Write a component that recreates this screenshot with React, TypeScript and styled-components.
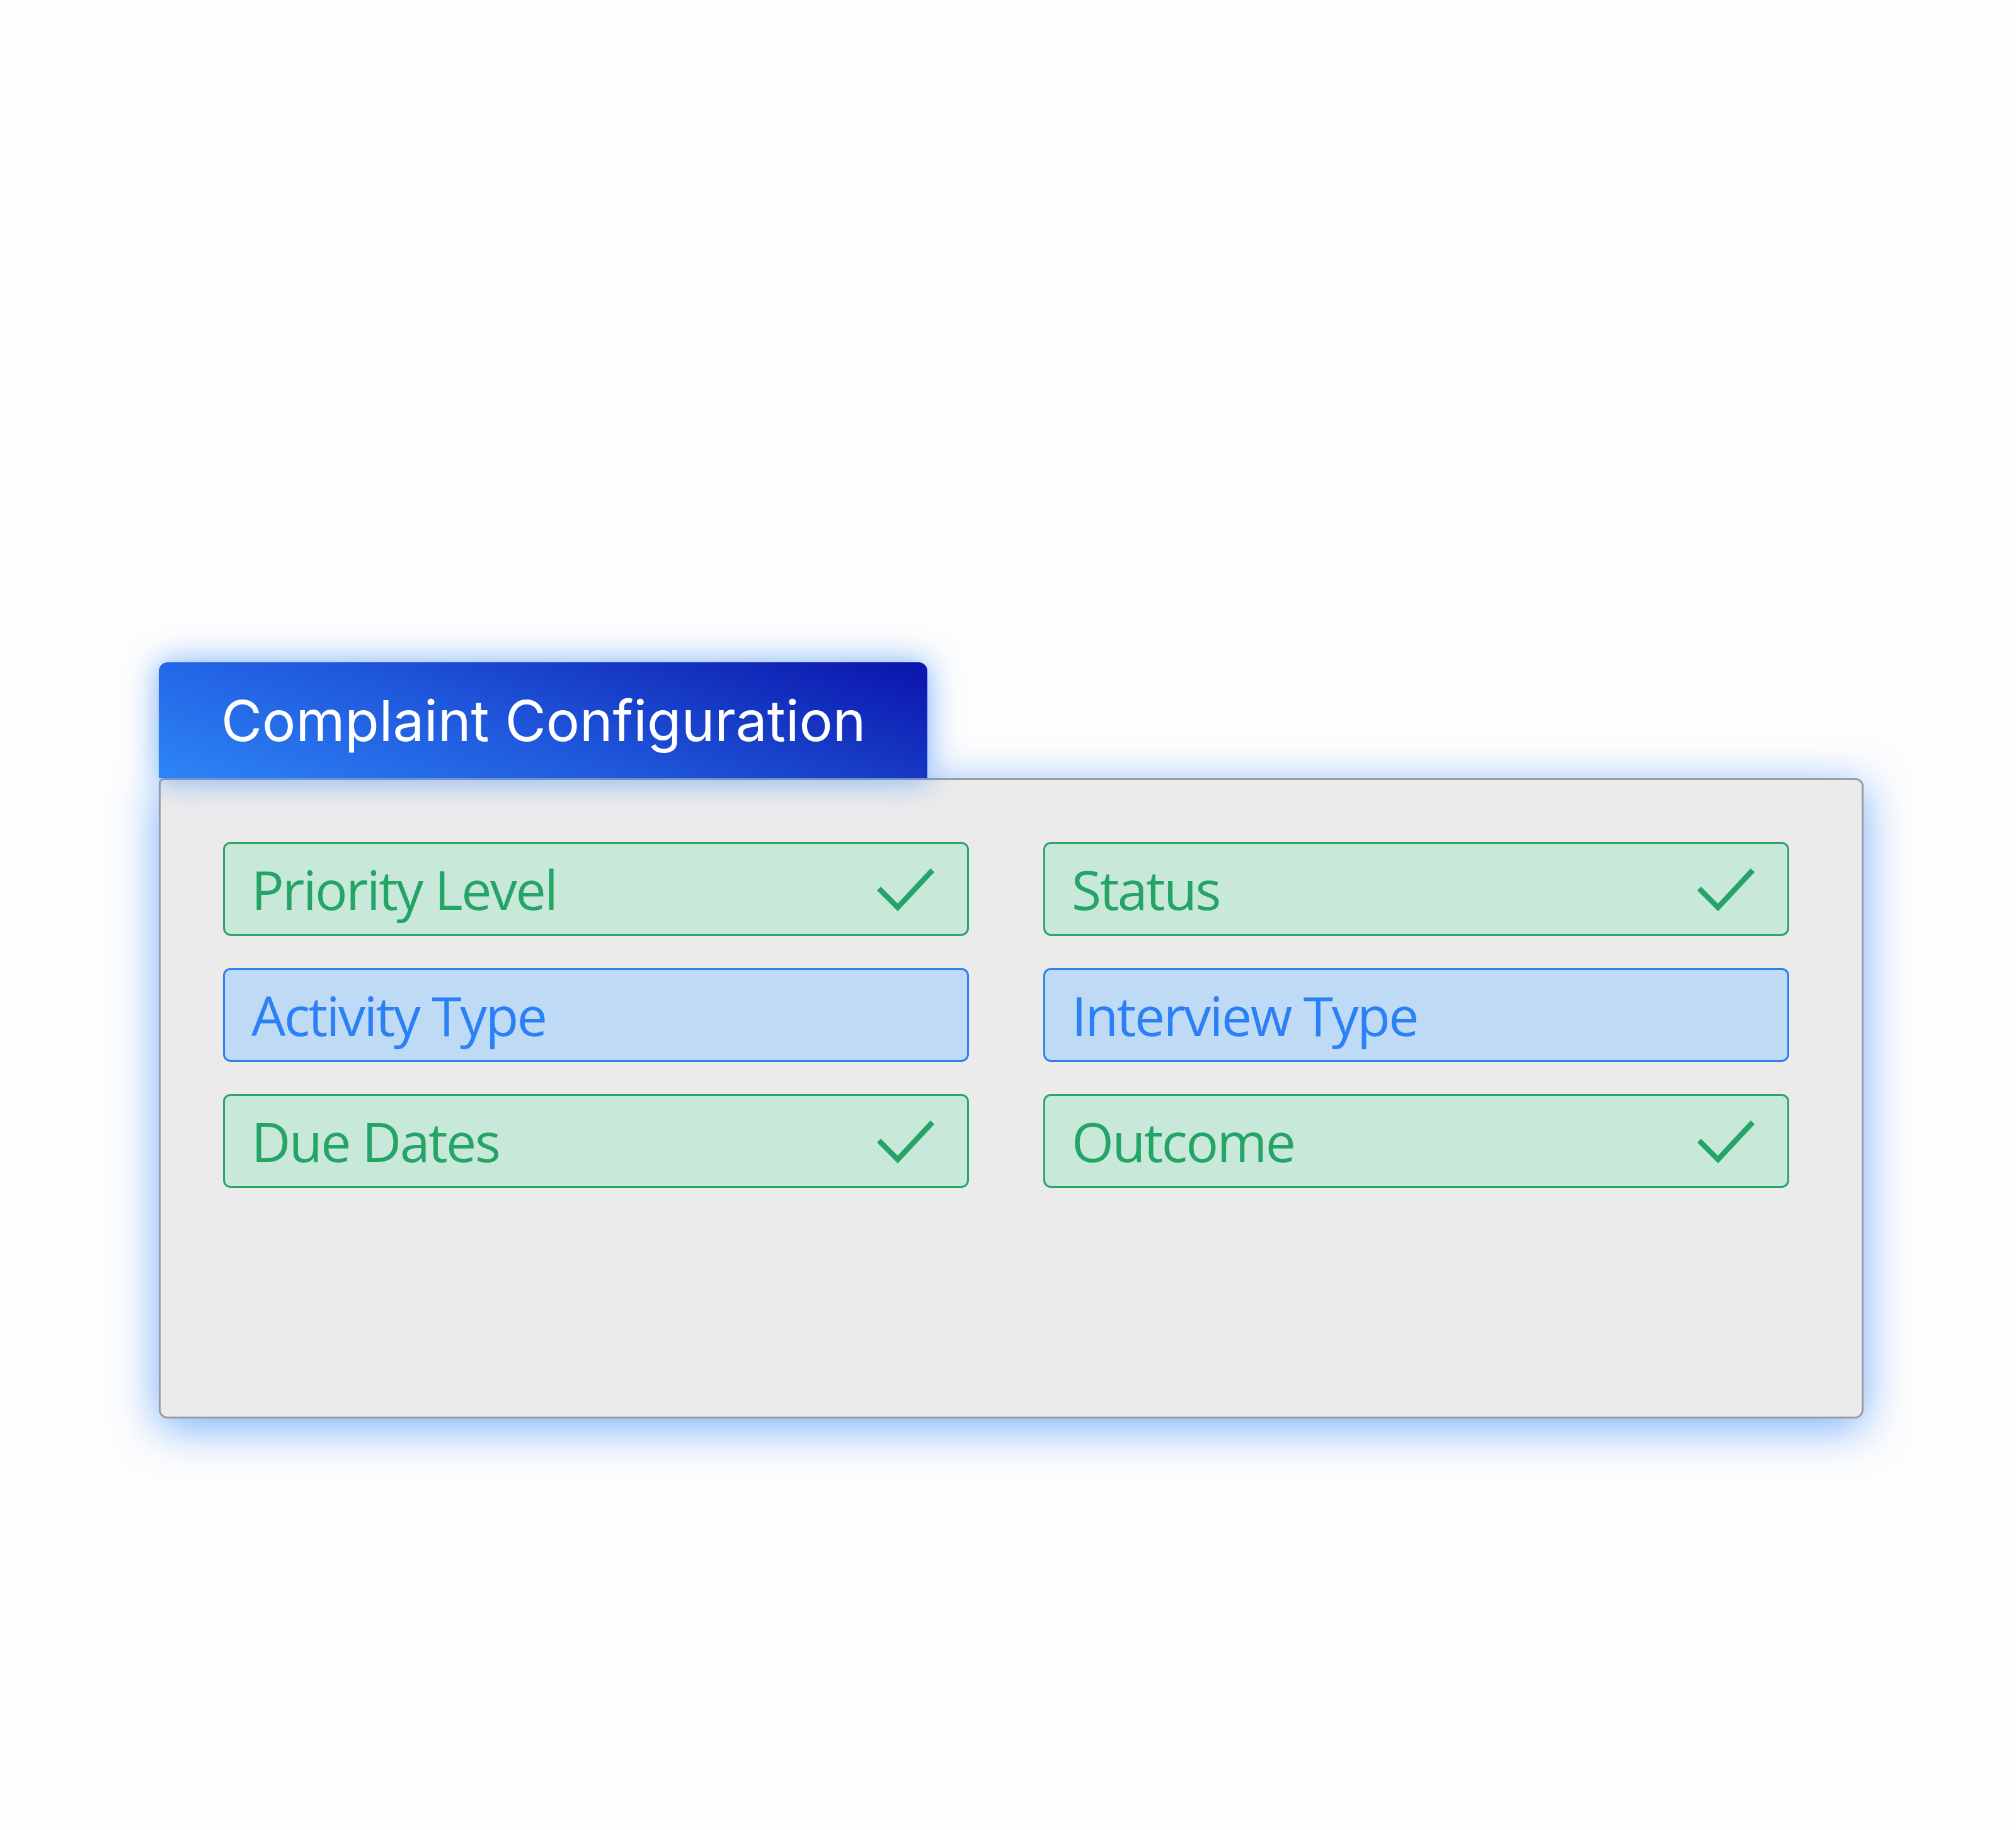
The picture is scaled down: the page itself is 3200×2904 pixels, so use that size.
import React from 'react'
import styled, { createGlobalStyle } from 'styled-components'

const GlobalStyle = createGlobalStyle`
  html, body {
    margin: 0;
    padding: 0;
    background: #fdfdfd;
  }
`

const Page = styled.div`
  width: 3200px;
  height: 2904px;
  box-sizing: border-box;
  padding: 1051px 0 0 252px;
  background: #fdfdfd;
`

const Card = styled.div`
  display: flex;
  flex-direction: column;
  align-items: flex-start;
  width: 2706px;
`

const Tab = styled.div`
  position: relative;
  z-index: 2;
  width: 1220px;
  height: 184px;
  box-sizing: border-box;
  padding-left: 99px;
  display: flex;
  align-items: center;
  border-radius: 14px 14px 0 0;
  background: linear-gradient(20deg, #2d85f7 0%, #1f57dc 45%, #0b14aa 100%);
  box-shadow: 0 0 50px rgba(60, 140, 255, 0.7);
  color: #ffffff;
  font-family: Inter, 'Noto Sans', sans-serif;
  font-size: 89px;
  font-weight: 400;
  white-space: nowrap;
`

const Panel = styled.div`
  position: relative;
  z-index: 1;
  width: 2706px;
  height: 1016px;
  box-sizing: border-box;
  padding: 98px 115px 0 99px;
  background: #ebebeb;
  border: 3px solid #9b9b9b;
  border-radius: 8px 12px 14px 14px;
  box-shadow: 0 14px 70px rgba(60, 140, 255, 0.7);
`

const Grid = styled.div`
  display: grid;
  grid-template-columns: 1184px 1184px;
  grid-auto-rows: 149px;
  column-gap: 118px;
  row-gap: 51px;
`

const Chip = styled.div<{ $done: boolean }>`
  display: flex;
  align-items: center;
  justify-content: space-between;
  box-sizing: border-box;
  padding: 0 52px 0 42px;
  border-radius: 12px;
  border: 3px solid ${(p) => (p.$done ? '#27a56a' : '#2f7ff2')};
  background: ${(p) => (p.$done ? '#c8e9da' : '#bfdaf4')};
  color: ${(p) => (p.$done ? '#24a467' : '#2b80f6')};
  font-family: 'Open Sans', 'Noto Sans', sans-serif;
  font-size: 86px;
  font-weight: 400;
  letter-spacing: -2.5px;
  white-space: nowrap;
`

const Check = () => (
  <svg width="92" height="70" viewBox="0 0 92 70" fill="none">
    <polyline
      points="4,34 34,64 89,5"
      stroke="#24a467"
      strokeWidth="8.5"
      strokeLinecap="butt"
      strokeLinejoin="miter"
    />
  </svg>
)

const items = [
  { label: 'Priority Level', done: true },
  { label: 'Status', done: true },
  { label: 'Activity Type', done: false },
  { label: 'Interview Type', done: false },
  { label: 'Due Dates', done: true },
  { label: 'Outcome', done: true },
]

const App = () => {
  return (
    <Page>
      <GlobalStyle />
      <Card>
        <Tab>Complaint Configuration</Tab>
        <Panel>
          <Grid>
            {items.map((item) => (
              <Chip key={item.label} $done={item.done}>
                <span>{item.label}</span>
                {item.done && <Check />}
              </Chip>
            ))}
          </Grid>
        </Panel>
      </Card>
    </Page>
  )
}

export default App
